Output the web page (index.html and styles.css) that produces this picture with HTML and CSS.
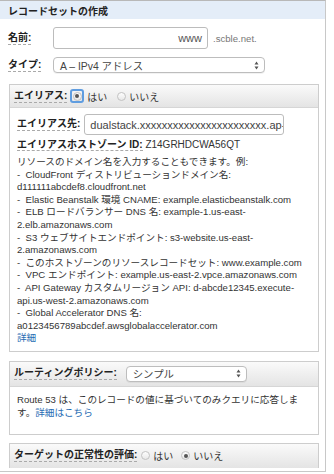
FILE: index.html
```html
<!DOCTYPE html>
<html lang="ja">
<head>
<meta charset="utf-8">
<link rel="stylesheet" href="styles.css">
</head>
<body>
<div class="panel">
  <div class="title">レコードセットの作成</div>
  <div class="form">
    <div class="row">
      <span class="label lbl-w">名前:</span>
      <div class="input name-input">www</div>
      <span class="suffix">.scble.net.</span>
    </div>
    <div class="row row-type">
      <span class="label lbl-w">タイプ:</span>
      <div class="select type-select">
        <span>A – IPv4 アドレス</span>
        <svg class="arrows" width="5" height="9" viewBox="0 0 5 9"><path d="M2.5 0.5 L4.5 3.5 H0.5 Z M2.5 8.5 L4.5 5.5 H0.5 Z" fill="#555"/></svg>
      </div>
    </div>

    <div class="box alias-box">
      <div class="box-head">
        <span class="label">エイリアス:</span>
        <span class="radio-wrap focus"><span class="radio checked"></span></span>
        <span class="opt">はい</span>
        <span class="radio"></span>
        <span class="opt">いいえ</span>
      </div>
      <div class="box-body">
        <div class="row alias-row">
          <span class="label">エイリアス先:</span>
          <div class="input alias-input">dualstack.xxxxxxxxxxxxxxxxxxxxxxx.ap-northeast-1.elb.amazonaws.com</div>
        </div>
        <div class="zone"><span class="label">エイリアスホストゾーン ID:</span> Z14GRHDCWA56QT</div>
        <div class="help">
          リソースのドメイン名を入力することもできます。例:<br>
          -&nbsp; CloudFront ディストリビューションドメイン名: d111111abcdef8.cloudfront.net<br>
          -&nbsp; Elastic Beanstalk 環境 CNAME: example.elasticbeanstalk.com<br>
          -&nbsp; ELB ロードバランサー DNS 名: example-1.us-east-2.elb.amazonaws.com<br>
          -&nbsp; S3 ウェブサイトエンドポイント: s3-website.us-east-2.amazonaws.com<br>
          -&nbsp; このホストゾーンのリソースレコードセット: www.example.com<br>
          -&nbsp; VPC エンドポイント: example.us-east-2.vpce.amazonaws.com<br>
          -&nbsp; API Gateway カスタムリージョン API: d-abcde12345.execute-api.us-west-2.amazonaws.com<br>
          -&nbsp; Global Accelerator DNS 名: a0123456789abcdef.awsglobalaccelerator.com<br>
          <a class="link" href="#">詳細</a>
        </div>
      </div>
    </div>

    <div class="box routing-box">
      <div class="box-head">
        <span class="label">ルーティングポリシー:</span>
        <div class="select policy-select">
          <span>シンプル</span>
          <svg class="arrows" width="5" height="9" viewBox="0 0 5 9"><path d="M2.5 0.5 L4.5 3.5 H0.5 Z M2.5 8.5 L4.5 5.5 H0.5 Z" fill="#555"/></svg>
        </div>
      </div>
      <div class="box-body routing-body">
        <p class="routing-text">Route 53 は、このレコードの値に基づいてのみクエリに応答します。<a class="link" href="#">詳細はこちら</a></p>
      </div>
    </div>

    <div class="box health-box">
      <div class="box-head">
        <span class="label">ターゲットの正常性の評価:</span>
        <span class="radio"></span>
        <span class="opt">はい</span>
        <span class="radio checked"></span>
        <span class="opt">いいえ</span>
      </div>
    </div>
  </div>
</div>
</body>
</html>
```

FILE: styles.css
```css
* { box-sizing: border-box; }
html, body { margin: 0; padding: 0; background: #fff; }
body {
  font-family: "Liberation Sans", "Noto Sans CJK JP", sans-serif;
  font-size: 9.6px;
  color: #333;
  width: 334px;
  height: 474px;
  overflow: hidden;
}
.panel {
  width: 326px;
  height: 472px;
  border-top: 1px solid #b8b8b8;
  border-right: 1px solid #c8c8c8;
  border-bottom: 1px solid #c8c8c8;
}
.title {
  height: 18px;
  background: #e4edf8;
  font-weight: bold;
  font-size: 10px;
  color: #222;
  padding-left: 8px;
  display: flex;
  align-items: center;
}
.form { padding: 8px 7px 0 8px; }
.row { display: flex; align-items: center; }
.label {
  font-weight: bold;
  font-size: 10px;
  color: #222;
  border-bottom: 1px dashed #aaa;
  line-height: 12px;
}
.lbl-w {
  width: 45px;
  flex: none;
  border-bottom: none;
  text-decoration: underline dashed #aaa;
  text-underline-offset: 3px;
}
.input {
  border: 1px solid #bcbcbc;
  border-radius: 3px;
  background: #fff;
  color: #555;
  font-size: 11px;
  white-space: nowrap;
  overflow: hidden;
  display: flex;
  align-items: center;
}
.name-input {
  width: 155px;
  height: 22px;
  justify-content: flex-end;
  padding-right: 5px;
}
.suffix { color: #777; font-size: 9.6px; margin-left: 5px; }
.row-type { margin-top: 8px; }
.select {
  border: 1px solid #bdbdbd;
  border-radius: 4px;
  background: #fff;
  height: 16px;
  display: flex;
  align-items: center;
  justify-content: space-between;
  padding: 0 5px 0 6px;
  font-size: 10.4px;
  color: #444;
  box-shadow: 0 1px 0 rgba(0,0,0,0.05);
}
.type-select { width: 212px; }
.arrows { flex: none; }
.box {
  border: 1px solid #cdcdcd;
  width: 310px;
  margin-left: 1px;
}
.alias-box { margin-top: 11px; }
.box-head {
  height: 23px;
  display: flex;
  align-items: center;
  padding-left: 4px;
  background: linear-gradient(#fafafa, #e4e4e4);
  border-bottom: 1px solid #d6d6d6;
}
.radio {
  width: 9px;
  height: 9px;
  border-radius: 50%;
  border: 1px solid #c2c2c2;
  background: linear-gradient(#fdfdfd, #e8e8e8);
  display: inline-flex;
  align-items: center;
  justify-content: center;
  flex: none;
}
.radio.checked::after {
  content: "";
  width: 4px;
  height: 4px;
  border-radius: 50%;
  background: #555;
}
.radio-wrap {
  margin-left: 3px;
  width: 14px;
  height: 14px;
  display: inline-flex;
  align-items: center;
  justify-content: center;
}
.radio-wrap.focus {
  border: 2px solid #5f9de0;
  border-radius: 3px;
}
.opt { font-size: 10px; color: #333; margin-left: 3px; margin-right: 8px; }
.alias-box .box-head .radio:not(.checked) { margin-left: 2px; }
.box-body { padding: 6px 7px 6px 7px; }
.alias-row .label { margin-right: 4px; }
.alias-input {
  width: 200px;
  height: 21px;
  padding-left: 5px;
  color: #444;
}
.zone { margin-top: 4px; font-size: 10px; color: #333; }
.help {
  margin-top: 5px;
  line-height: 12.6px;
  color: #333;
}
.link { color: #1f6cb3; text-decoration: none; }
.routing-box { margin-top: 9px; }
.routing-box .box-head { height: 25px; }
.policy-select { width: 121px; margin-left: 9px; }
.routing-body { height: 47px; padding-top: 7px; }
.routing-text { margin: 0; line-height: 12.6px; }
.health-box { margin-top: 8px; border-bottom: none; }
.health-box .box-head { height: 24px; border-bottom: none; }
.health-box .label { margin-right: 4px; }
.health-box .opt { margin-right: 8px; }
```
